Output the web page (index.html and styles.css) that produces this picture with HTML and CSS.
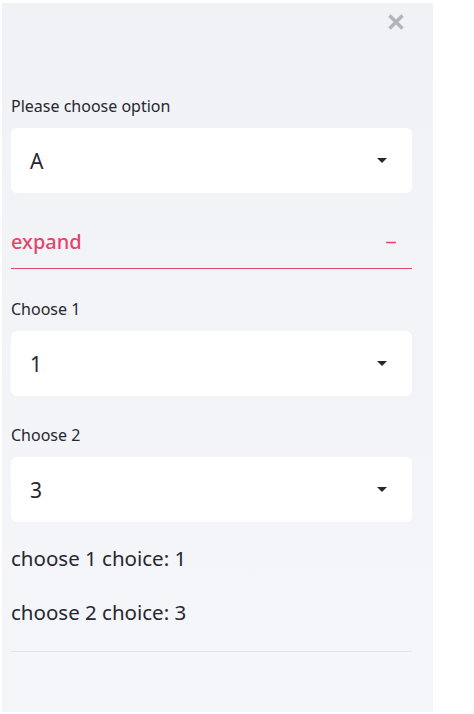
FILE: index.html
```html
<!DOCTYPE html>
<html>
<head>
<meta charset="utf-8">
<link rel="stylesheet" href="styles.css">
</head>
<body>
<aside class="sidebar">
  <div class="close-row">
    <svg class="close" width="18" height="18" viewBox="0 0 18 18"><path d="M2.5 2.5 L15.5 15.5 M15.5 2.5 L2.5 15.5" stroke="#b3b4b8" stroke-width="3.4" stroke-linecap="butt"/></svg>
  </div>
  <div class="content">
    <div class="field first">
      <div class="label">Please choose option</div>
      <div class="select"><span class="value">A</span><span class="caret"></span></div>
    </div>
    <div class="expander">
      <div class="exp-title">expand</div>
      <div class="exp-sign">−</div>
    </div>
    <div class="field f2">
      <div class="label">Choose 1</div>
      <div class="select"><span class="value">1</span><span class="caret"></span></div>
    </div>
    <div class="field f3">
      <div class="label">Choose 2</div>
      <div class="select"><span class="value">3</span><span class="caret"></span></div>
    </div>
    <p class="text t1">choose 1 choice: 1</p>
    <p class="text t2">choose 2 choice: 3</p>
    <hr class="rule">
  </div>
</aside>
</body>
</html>
```
FILE: styles.css
```css
html, body {
  margin: 0;
  padding: 0;
  background: #ffffff;
}
body {
  font-family: "Noto Sans", "Open Sans", sans-serif;
  color: #262730;
}
.sidebar {
  margin: 3px 0 0 2px;
  width: 431px;
  height: 709px;
  box-sizing: border-box;
  background: linear-gradient(180deg, #f0f2f6 0%, #f5f6f9 100%);
  padding: 0 21px 0 9px;
}
.close-row {
  height: 38px;
  display: flex;
  justify-content: flex-end;
  align-items: center;
  padding-right: 7px;
}
.close {
  display: block;
}
.field.first {
  margin-top: 55px;
}
.label {
  font-size: 16px;
  line-height: 20px;
  height: 20px;
}
.select {
  margin-top: 12px;
  height: 65px;
  background: #ffffff;
  border-radius: 6px;
  display: flex;
  align-items: center;
  justify-content: space-between;
  padding: 0 25px 0 19px;
}
.value {
  font-size: 21px;
  line-height: 26px;
}
.caret {
  width: 0;
  height: 0;
  border-left: 5px solid transparent;
  border-right: 5px solid transparent;
  border-top: 5px solid #262730;
}
.expander {
  margin-top: 33px;
  display: flex;
  justify-content: space-between;
  align-items: center;
  height: 42px;
  border-bottom: 1.5px solid #e1466b;
  color: #e1466b;
  padding-right: 15px;
}
.exp-title {
  font-size: 20px;
  font-weight: 500;
  line-height: 26px;
  padding-bottom: 10px;
}
.exp-sign {
  font-size: 21px;
  font-weight: 400;
  line-height: 26px;
  padding-bottom: 10px;
}
.field.f2 {
  margin-top: 30px;
}
.field.f3 {
  margin-top: 29px;
}
.text {
  margin: 0;
  font-size: 20.5px;
  line-height: 26px;
}
.text.t1 {
  margin-top: 23px;
}
.text.t2 {
  margin-top: 28px;
}
.rule {
  margin: 26px 0 0 0;
  border: 0;
  border-top: 1px solid #e3e5e9;
  height: 0;
}
```
